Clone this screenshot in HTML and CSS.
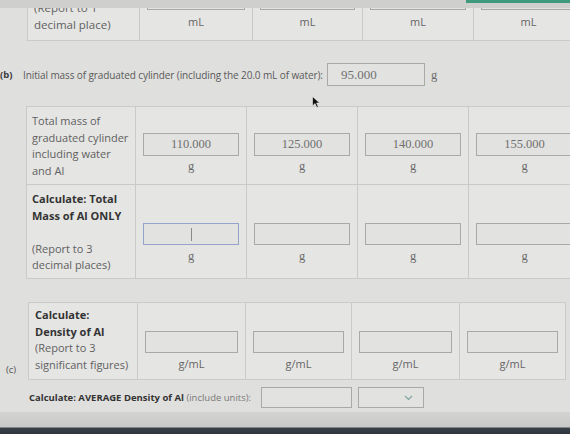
FILE: index.html
```html
<!DOCTYPE html>
<html>
<head>
<meta charset="utf-8">
<link rel="stylesheet" href="styles.css">
</head>
<body>
<div class="page">
  <div class="topband"></div>
  <div class="greenbar"></div>

  <div class="tbl tbl-top">
    <div class="cell label">(Report to 1<br>decimal place)</div>
    <div class="cell data"><span class="inp"></span><span class="unit">mL</span></div>
    <div class="cell data"><span class="inp"></span><span class="unit">mL</span></div>
    <div class="cell data"><span class="inp"></span><span class="unit">mL</span></div>
    <div class="cell data"><span class="inp"></span><span class="unit">mL</span></div>
  </div>

  <div class="line-b">
    <span class="tag">(b)</span>
    <span class="q">Initial mass of graduated cylinder (including the 20.0 mL of water):</span>
    <span class="inp inp-b">95.000</span>
    <span class="unit-serif">g</span>
  </div>

  <div class="tbl tbl-mass">
    <div class="cell label">Total mass of<br>graduated cylinder<br>including water<br>and Al</div>
    <div class="cell data r1"><span class="inp">110.000</span><span class="unit-serif">g</span></div>
    <div class="cell data r1"><span class="inp">125.000</span><span class="unit-serif">g</span></div>
    <div class="cell data r1"><span class="inp">140.000</span><span class="unit-serif">g</span></div>
    <div class="cell data r1"><span class="inp">155.000</span><span class="unit-serif">g</span></div>

    <div class="cell label"><b>Calculate: Total<br>Mass of Al ONLY</b><br><br>(Report to 3<br>decimal places)</div>
    <div class="cell data r2"><span class="inp focus"><span class="caret"></span></span><span class="unit-serif">g</span></div>
    <div class="cell data r2"><span class="inp"></span><span class="unit-serif">g</span></div>
    <div class="cell data r2"><span class="inp"></span><span class="unit-serif">g</span></div>
    <div class="cell data r2"><span class="inp"></span><span class="unit-serif">g</span></div>
  </div>

  <div class="sec-c">
    <span class="tag tag-c">(c)</span>
    <div class="tbl tbl-density">
      <div class="cell label"><b>Calculate:<br>Density of Al</b><br>(Report to 3<br>significant figures)</div>
      <div class="cell data r3"><span class="inp"></span><span class="unit">g/mL</span></div>
      <div class="cell data r3"><span class="inp"></span><span class="unit">g/mL</span></div>
      <div class="cell data r3"><span class="inp"></span><span class="unit">g/mL</span></div>
      <div class="cell data r3"><span class="inp"></span><span class="unit">g/mL</span></div>
    </div>
  </div>

  <div class="avg">
    <span class="avg-q"><b>Calculate: AVERAGE Density of Al</b> <span class="small">(include units):</span></span>
    <span class="inp inp-avg"></span>
    <span class="inp select">
      <svg width="9" height="6" viewBox="0 0 9 6"><path d="M1 1 L4.5 4.5 L8 1" fill="none" stroke="#7fa6a0" stroke-width="1.2"/></svg>
    </span>
  </div>

  <div class="foot"></div>

  <svg class="cursor" width="8" height="12" viewBox="0 0 8 12"><path d="M0.5 0.5 L0.5 10 L3 7.6 L4.8 11.5 L6.3 10.8 L4.6 7 L7.6 7 Z" fill="#111" stroke="#eee" stroke-width="0.6"/></svg>
</div>
</body>
</html>
```
FILE: styles.css
```css
* { box-sizing: border-box; }
html, body { margin: 0; padding: 0; }
body {
  width: 570px;
  height: 434px;
  overflow: hidden;
  background: #dfdfdd;
  font-family: "Open Sans", "Liberation Sans", sans-serif;
  color: #5c5c5c;
}
.page {
  position: relative;
  width: 570px;
  height: 434px;
  display: flex;
  flex-direction: column;
}
.topband {
  position: absolute;
  left: 0; top: 0;
  width: 570px; height: 8px;
  background: #cfcfcd;
  z-index: 2;
}
.greenbar {
  position: absolute;
  left: 466px; top: 0;
  width: 110px; height: 3px;
  background: #3f9a7d;
  z-index: 3;
}
.tbl {
  display: grid;
  border-top: 1px solid #cacac8;
  border-left: 1px solid #cacac8;
  flex: none;
}
.cell {
  background: #e5e5e3;
  border-right: 1px solid #cacac8;
  border-bottom: 1px solid #cacac8;
}
.label {
  font-size: 11px;
  line-height: 16.5px;
  color: #616161;
  padding: 4px 6px;
}
.label b { color: #333; font-weight: 700; }
.data {
  display: flex;
  flex-direction: column;
  align-items: center;
}
.inp {
  display: flex;
  align-items: center;
  justify-content: center;
  width: calc(100% - 14px);
  height: 22px;
  background: #e2e2e0;
  border: 1px solid #a9a9a7;
  font-family: "Liberation Serif", "DejaVu Serif", serif;
  font-size: 12.5px;
  color: #707070;
  flex: none;
}
.unit {
  font-size: 11px;
  line-height: 16px;
  color: #666;
}
.unit-serif {
  font-family: "Liberation Serif", "DejaVu Serif", serif;
  font-size: 12.5px;
  line-height: 18px;
  color: #6a6a6a;
}

/* top table */
.tbl-top {
  margin-top: -30px;
  margin-left: 27px;
  grid-template-columns: 112px 113px 110px 111px 110px;
  grid-template-rows: 70px;
}
.tbl-top .label {
  display: flex;
  flex-direction: column;
  justify-content: flex-end;
  padding: 0 6px 7px;
  line-height: 17px;
  font-size: 11.5px;
}
.tbl-top .data {
  justify-content: flex-end;
  padding-bottom: 10px;
}
.tbl-top .inp { margin-bottom: 4px; }

/* (b) line */
.line-b {
  display: flex;
  align-items: center;
  height: 23px;
  margin-top: 22px;
  flex: none;
}
.tag {
  font-size: 9.5px;
  font-weight: 700;
  color: #3c3c3c;
  width: 23px;
}
.q {
  font-size: 10px;
  color: #5a5a5a;
  letter-spacing: -0.1px;
}
.inp-b {
  width: 98px;
  height: 23px;
  margin-left: 4px;
  justify-content: flex-start;
  padding-left: 13px;
  font-size: 13px;
}
.line-b .unit-serif { margin-left: 6px; }

/* mass table */
.tbl-mass {
  margin-top: 20px;
  margin-left: 26px;
  grid-template-columns: 109px 111px 111px 111px 112px;
  grid-template-rows: 78px 94px;
}
.tbl-mass .label { padding: 6px 6px 0 5px; }
.r1 { padding-top: 26px; }
.r1 .inp { height: 23px; }
.r1 .unit-serif { margin-top: 1px; }
.r2 { padding-top: 38px; }
.r2 .inp { height: 22px; }
.r2 .unit-serif { margin-top: 2px; }
.focus { border-color: #93a3c9; }
.caret {
  width: 1px;
  height: 13px;
  background: #8a8a8a;
}

/* density table */
.sec-c {
  display: flex;
  align-items: flex-end;
  margin-top: 23px;
  flex: none;
}
.tag-c {
  width: 28px;
  padding-left: 6px;
  padding-bottom: 4px;
  font-weight: 400;
  color: #555;
}
.tbl-density {
  grid-template-columns: 109px 108px 106px 108px 106px;
  grid-template-rows: 77px;
}
.tbl-density .label { padding: 4px 6px 0 6px; }
.r3 { padding-top: 28px; }
.r3 .unit { margin-top: 2px; line-height: 17px; }

/* average */
.avg {
  display: flex;
  align-items: center;
  margin-top: 7px;
  padding-left: 29px;
  height: 21px;
  flex: none;
}
.avg-q {
  font-size: 9.5px;
  color: #333;
  width: 232px;
}
.avg-q b { font-weight: 700; }
.small { color: #7a7a7a; font-size: 9.5px; }
.inp-avg { width: 91px; height: 21px; }
.select {
  width: 66px;
  height: 21px;
  margin-left: 6px;
  justify-content: flex-end;
  padding-right: 10px;
}

.foot {
  margin-top: auto;
  height: 22px;
  background: linear-gradient(#d3d3d1 0, #c9c9c7 15px, #3b4149 16px, #2f353d 22px);
  flex: none;
}
.cursor {
  position: absolute;
  left: 312px;
  top: 96px;
  z-index: 4;
}
```
